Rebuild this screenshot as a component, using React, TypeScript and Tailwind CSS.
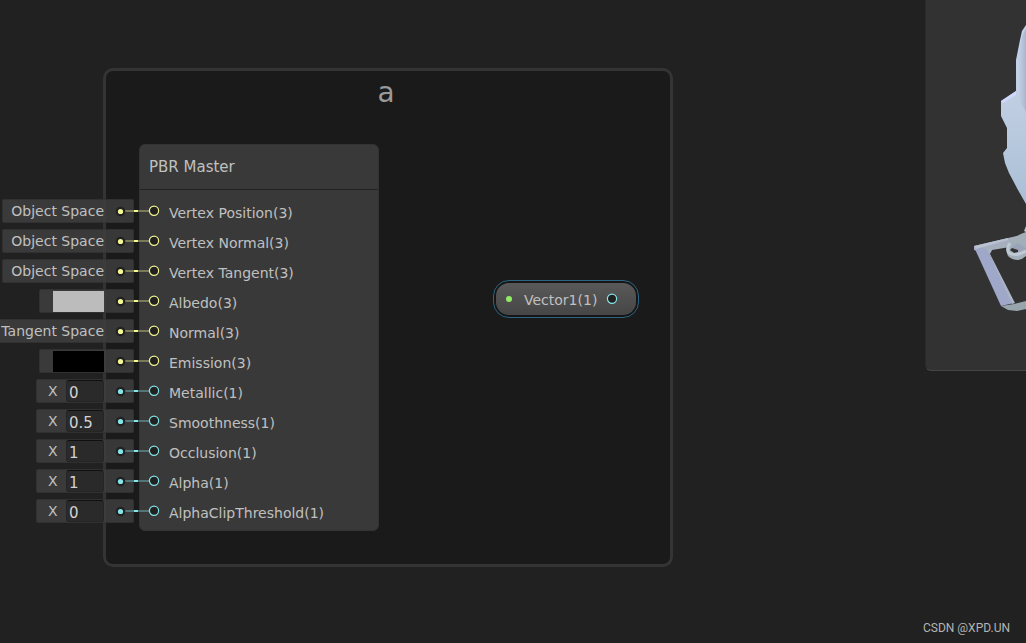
import React from 'react';

type Slot = {
  label: string;
  color: string;
  kind: 'space' | 'color' | 'number';
  value: string;
};

const YELLOW = '#f4f692';
const CYAN = '#84e4e7';

const slots: Slot[] = [
  { label: 'Vertex Position(3)', color: YELLOW, kind: 'space', value: 'Object Space' },
  { label: 'Vertex Normal(3)', color: YELLOW, kind: 'space', value: 'Object Space' },
  { label: 'Vertex Tangent(3)', color: YELLOW, kind: 'space', value: 'Object Space' },
  { label: 'Albedo(3)', color: YELLOW, kind: 'color', value: '#bcbcbc' },
  { label: 'Normal(3)', color: YELLOW, kind: 'space', value: 'Tangent Space' },
  { label: 'Emission(3)', color: YELLOW, kind: 'color', value: '#000000' },
  { label: 'Metallic(1)', color: CYAN, kind: 'number', value: '0' },
  { label: 'Smoothness(1)', color: CYAN, kind: 'number', value: '0.5' },
  { label: 'Occlusion(1)', color: CYAN, kind: 'number', value: '1' },
  { label: 'Alpha(1)', color: CYAN, kind: 'number', value: '1' },
  { label: 'AlphaClipThreshold(1)', color: CYAN, kind: 'number', value: '0' }
];

const Port = ({ color }: { color: string }) => (
  <svg width="12" height="12" viewBox="0 0 12 12" className="shrink-0" aria-hidden="true">
    <circle cx="6" cy="5.7" r="4.6" fill="#212121" stroke={color} strokeWidth="1.2" />
  </svg>
);

// Dot inside the slot and the short edge running to the port
const Wire = ({ color }: { color: string }) => (
  <svg width="36" height="12" viewBox="0 0 36 12" className="shrink-0 -mr-[18px]" aria-hidden="true">
    <path d="M11 6H35" stroke={color} strokeOpacity="0.35" strokeWidth="2" />
    <path d="M20 6H24" stroke={color} strokeWidth="2" />
    <circle cx="6.5" cy="6.5" r="4.8" fill="#212121" />
    <circle cx="6.5" cy="6.5" r="2.6" fill={color} />
  </svg>
);

const SlotField = ({ slot }: { slot: Slot }) => {
  if (slot.kind === 'color') {
    return (
      <input
        type="color"
        defaultValue={slot.value}
        aria-label={slot.label}
        className="w-[51px] h-[21px] ml-[13px] p-0 border-0 appearance-none bg-transparent [&::-webkit-color-swatch-wrapper]:p-0 [&::-webkit-color-swatch]:border-0 [&::-webkit-color-swatch]:rounded-none"
      />
    );
  }
  if (slot.kind === 'number') {
    return (
      <label className="flex items-center ml-[11px]">
        <span className="w-[18px] text-[14px]">X</span>
        <input
          type="text"
          aria-label={slot.label}
          defaultValue={slot.value}
          className="w-[38px] h-[22px] pt-[5px] pl-[2px] rounded-[3px] border border-[#252525] border-t-[#101010] bg-[#2a2a2a] text-[15px] text-[#d2d2d2] outline-none"
        />
      </label>
    );
  }
  return <span className="pl-[8px] text-[14px] whitespace-nowrap">{slot.value}</span>;
};

const SlotColumn = () => (
  <div className="absolute right-full top-[52px] mr-[5px] flex flex-col items-end">
    {slots.map((slot) => (
      <div key={slot.label} className="h-[30px] flex items-center">
        <div className="h-6 flex items-center gap-[10px] pr-[1px] rounded-[2px] border border-[#2c2c2c]/60 bg-[#3e3e3e]/85">
          <SlotField slot={slot} />
          <Wire color={slot.color} />
        </div>
      </div>
    ))}
  </div>
);

const MasterNode = () => (
  <article className="absolute left-[33px] top-[73px] w-[240px]">
    <div className="rounded-md bg-[#393939] pb-1 border border-[#333333]">
      <h2 className="h-[45px] flex items-center pl-[9px] text-[15px] border-b border-[#222222]">PBR Master</h2>
      <ul className="pt-[6px]">
        {slots.map((slot) => (
          <li key={slot.label} className="h-[30px] flex items-center gap-[9px] pl-2">
            <Port color={slot.color} />
            <span className="pt-1 text-[14px] leading-5">{slot.label}</span>
          </li>
        ))}
      </ul>
    </div>
    <SlotColumn />
  </article>
);

const VectorNode = () => (
  <article className="absolute left-[387px] top-[209px] p-[2px] rounded-[16px] border border-[#2a6583] bg-[#161616]">
    <div className="w-[140px] h-8 flex items-center pl-[10px] pr-[18px] rounded-[13px] bg-linear-to-b from-[#595959] to-[#464646]">
      <span className="size-[6px] shrink-0 rounded-full bg-[#93ec65]"></span>
      <span className="grow pl-[12px] pt-[3px] text-[14px] whitespace-nowrap">Vector1(1)</span>
      <Port color={CYAN} />
    </div>
  </article>
);

const MainPreview = () => (
  <aside className="absolute right-0 top-0 w-[101px] rounded-bl-md border-l border-b border-l-[#2b2b2b] border-b-[#454545] bg-[#323232] overflow-hidden">
    <svg width="100" height="370" viewBox="0 0 100 370" role="img" aria-label="Main preview">
      <defs>
        <linearGradient id="body" x1="0" y1="0" x2="0" y2="1">
          <stop offset="0" stopColor="#c5d2ee" />
          <stop offset="0.45" stopColor="#bfcde1" />
          <stop offset="1" stopColor="#a9bfd6" />
        </linearGradient>
        <linearGradient id="shade" x1="0" y1="0" x2="1" y2="0">
          <stop offset="0" stopColor="#c8d4ec" />
          <stop offset="1" stopColor="#a9b7cb" />
        </linearGradient>
      </defs>
      <path d="M100 25L96 31L94 40L92 50L90 60V91L81 97L75 101V116L81 128V148L77 153L79 163L83 173L92 190L100 204Z" fill="url(#body)" />
      <path d="M100 28L96 36L93 56L91 64V92L95 103L100 112Z" fill="url(#shade)" />
      <path d="M90 91L75 101L77 103L90 95Z" fill="#cfd8fb" />
      <path d="M100 226L98 231L100 232Z" fill="#b8c6d8" />
      {/* frame */}
      <path d="M48 246L82 238L96 235L84 247L66 250L61 254L48 250Z" fill="#a6afbd" />
      <path d="M48 247L61 249L88 303L75 306Z" fill="#9fa8c8" />
      <path d="M61 249L66 250L64 254L89 303L86 304Z" fill="#abb4c4" />
      <path d="M48 246L82 238L82 240L50 249Z" fill="#b9c2d2" />
      <path d="M75 306L88 304L100 301V309L91 311L82 310Z" fill="#98a5ac" />
      {/* ring */}
      <path d="M100 232Q88 236 82 243Q79 249 82 256Q86 260 92 260Q97 259 100 256Z" fill="#a3afb8" />
      <path d="M100 248L92 243L86 247L85 250L90 252Q96 252 100 249Z" fill="#9aa3b8" />
      <path d="M86 248L84 250L88 253L92 252L92 250Z" fill="#323232" />
      <path d="M84 243Q80 249 83 253Q90 257 100 251" fill="none" stroke="#bfc9d6" strokeWidth="3" />
    </svg>
  </aside>
);

const App = () => {
  return (
    <main
      className="relative min-h-screen overflow-hidden bg-[#212121] text-[#c0c0c0]"
      style={{ fontFamily: '"DejaVu Sans", Verdana, sans-serif' }}
    >
      <section className="absolute left-[103px] top-[68px] w-[570px] h-[499px] rounded-[10px] border-[3px] border-[#343434] bg-[#1a1a1a]">
        <h1 className="pt-[2px] pr-1 text-center text-[28px] leading-10 text-[#999999]">a</h1>
        <MasterNode />
        <VectorNode />
      </section>

      <MainPreview />

      <footer
        className="absolute right-4 bottom-[7px] text-[12px] leading-4 text-[#b4b4b4]"
        style={{ fontFamily: 'Roboto, "Liberation Sans", sans-serif' }}
      >
        CSDN @XPD.UN
      </footer>
    </main>
  );
};

export default App;
